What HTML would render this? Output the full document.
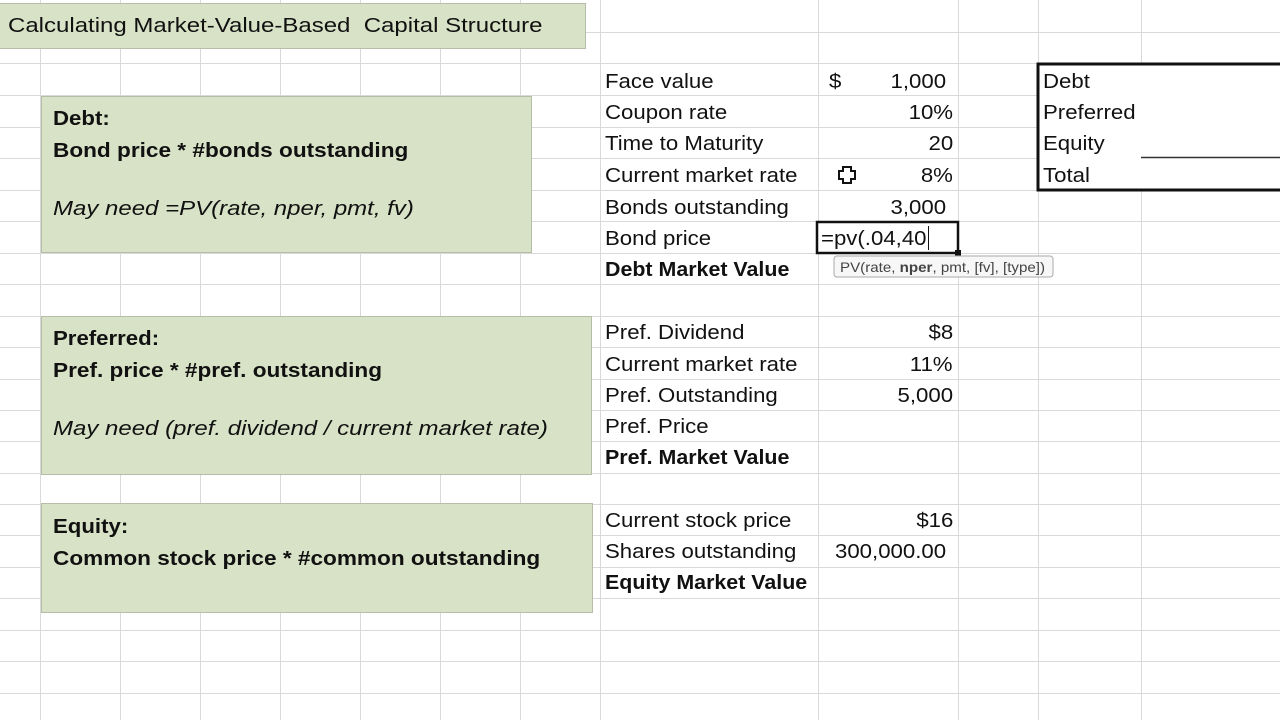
<!DOCTYPE html><html><head><style>
body{margin:0;width:1280px;height:720px;overflow:hidden;background:#fff;position:relative;font-family:"Liberation Sans",sans-serif;color:#111}
.t{position:absolute;font-size:20px;white-space:nowrap;transform-origin:0 50%;transform:scaleX(1.11);line-height:24px;margin-top:1px}
.t.i{transform:scaleX(1.2)}
.t.bl{transform:scaleX(1.07)}
.r{transform-origin:100% 50%}
.box{position:absolute;background:#d8e2c6;border:1px solid #b5bca8}
b{font-weight:bold}
</style></head><body>
<svg width="1280" height="720" style="position:absolute;left:0;top:0">
<g stroke="#d9d9d9" stroke-width="1">
<line x1="40.5" y1="0" x2="40.5" y2="720"/><line x1="120.5" y1="0" x2="120.5" y2="720"/><line x1="200.5" y1="0" x2="200.5" y2="720"/><line x1="280.5" y1="0" x2="280.5" y2="720"/><line x1="360.5" y1="0" x2="360.5" y2="720"/><line x1="440.5" y1="0" x2="440.5" y2="720"/><line x1="520.5" y1="0" x2="520.5" y2="720"/><line x1="600.5" y1="0" x2="600.5" y2="720"/><line x1="818.5" y1="0" x2="818.5" y2="720"/><line x1="958.5" y1="0" x2="958.5" y2="720"/><line x1="1038.5" y1="0" x2="1038.5" y2="720"/><line x1="1141.5" y1="0" x2="1141.5" y2="720"/>
<line x1="0" y1="32.5" x2="1280" y2="32.5"/><line x1="0" y1="63.5" x2="1280" y2="63.5"/><line x1="0" y1="95.5" x2="1280" y2="95.5"/><line x1="0" y1="127.5" x2="1280" y2="127.5"/><line x1="0" y1="158.5" x2="1280" y2="158.5"/><line x1="0" y1="190.5" x2="1280" y2="190.5"/><line x1="0" y1="221.5" x2="1280" y2="221.5"/><line x1="0" y1="253.5" x2="1280" y2="253.5"/><line x1="0" y1="284.5" x2="1280" y2="284.5"/><line x1="0" y1="316.5" x2="1280" y2="316.5"/><line x1="0" y1="347.5" x2="1280" y2="347.5"/><line x1="0" y1="379.5" x2="1280" y2="379.5"/><line x1="0" y1="410.5" x2="1280" y2="410.5"/><line x1="0" y1="441.5" x2="1280" y2="441.5"/><line x1="0" y1="473.5" x2="1280" y2="473.5"/><line x1="0" y1="504.5" x2="1280" y2="504.5"/><line x1="0" y1="535.5" x2="1280" y2="535.5"/><line x1="0" y1="567.5" x2="1280" y2="567.5"/><line x1="0" y1="598.5" x2="1280" y2="598.5"/><line x1="0" y1="630.5" x2="1280" y2="630.5"/><line x1="0" y1="661.5" x2="1280" y2="661.5"/><line x1="0" y1="693.5" x2="1280" y2="693.5"/>
</g>
<rect x="1038" y="64" width="250" height="126" fill="#fff" stroke="#111" stroke-width="3"/>
<line x1="1141" y1="157.5" x2="1280" y2="157.5" stroke="#333" stroke-width="1.5"/>
<rect x="817" y="222" width="141" height="31" fill="#fff" stroke="#111" stroke-width="2.5"/>
<rect x="955" y="250" width="6" height="6" fill="#111"/>
<rect x="834" y="256" width="219" height="21" rx="3" fill="#f7f7f7" stroke="#aaa"/>
<line x1="928.5" y1="226" x2="928.5" y2="250" stroke="#111"/>
<path d="M843 167h8v4h4v8h-4v4h-8v-4h-4v-8h4z" fill="#fff" stroke="#111" stroke-width="2"/>
</svg>
<div class="box" style="left:-1px;top:3px;width:585px;height:44px"></div>
<div class="box" style="left:41px;top:96px;width:489px;height:155px"></div>
<div class="box" style="left:41px;top:316px;width:549px;height:157px"></div>
<div class="box" style="left:41px;top:503px;width:550px;height:108px"></div>
<div class="t" style="left:8px;top:13px;transform:scaleX(1.2)">Calculating Market-Value-Based&nbsp; Capital Structure</div>
<div class="t" style="left:53px;top:106px"><b>Debt:</b></div>
<div class="t" style="left:53px;top:138px;transform:scaleX(1.13)"><b>Bond price * #bonds outstanding</b></div>
<div class="t i" style="left:53px;top:196px"><i>May need =PV(rate, nper, pmt, fv)</i></div>
<div class="t" style="left:53px;top:326px"><b>Preferred:</b></div>
<div class="t" style="left:53px;top:358px;transform:scaleX(1.13)"><b>Pref. price * #pref. outstanding</b></div>
<div class="t i" style="left:53px;top:416px"><i>May need (pref. dividend / current market rate)</i></div>
<div class="t" style="left:53px;top:514px"><b>Equity:</b></div>
<div class="t" style="left:53px;top:546px;transform:scaleX(1.13)"><b>Common stock price * #common outstanding</b></div>
<div class="t" style="left:605px;top:69px">Face value</div>
<div class="t" style="left:605px;top:100px">Coupon rate</div>
<div class="t" style="left:605px;top:131px">Time to Maturity</div>
<div class="t" style="left:605px;top:163px">Current market rate</div>
<div class="t" style="left:605px;top:195px">Bonds outstanding</div>
<div class="t" style="left:605px;top:226px">Bond price</div>
<div class="t bl" style="left:605px;top:257px"><b>Debt Market Value</b></div>
<div class="t" style="left:605px;top:320px">Pref. Dividend</div>
<div class="t" style="left:605px;top:352px">Current market rate</div>
<div class="t" style="left:605px;top:383px">Pref. Outstanding</div>
<div class="t" style="left:605px;top:414px">Pref. Price</div>
<div class="t bl" style="left:605px;top:445px"><b>Pref. Market Value</b></div>
<div class="t" style="left:605px;top:508px">Current stock price</div>
<div class="t" style="left:605px;top:539px">Shares outstanding</div>
<div class="t bl" style="left:605px;top:570px"><b>Equity Market Value</b></div>
<div class="t" style="left:829px;top:69px">$</div>
<div class="t r" style="right:334px;top:69px">1,000</div>
<div class="t r" style="right:327px;top:100px">10%</div>
<div class="t r" style="right:327px;top:131px">20</div>
<div class="t r" style="right:327px;top:163px">8%</div>
<div class="t r" style="right:334px;top:195px">3,000</div>
<div class="t" style="left:821px;top:226px">=pv(.04,40</div>
<div class="t r" style="right:327px;top:320px">$8</div>
<div class="t r" style="right:327px;top:352px">11%</div>
<div class="t r" style="right:327px;top:383px">5,000</div>
<div class="t r" style="right:327px;top:508px">$16</div>
<div class="t r" style="right:334px;top:539px">300,000.00</div>
<div class="t" style="left:840px;top:258px;font-size:14px;line-height:18px;color:#444;transform:scaleX(1.08);margin-top:0">PV(rate, <b>nper</b>, pmt, [fv], [type])</div>
<div class="t" style="left:1043px;top:69px">Debt</div>
<div class="t" style="left:1043px;top:100px">Preferred</div>
<div class="t" style="left:1043px;top:131px">Equity</div>
<div class="t" style="left:1043px;top:163px">Total</div>
</body></html>
